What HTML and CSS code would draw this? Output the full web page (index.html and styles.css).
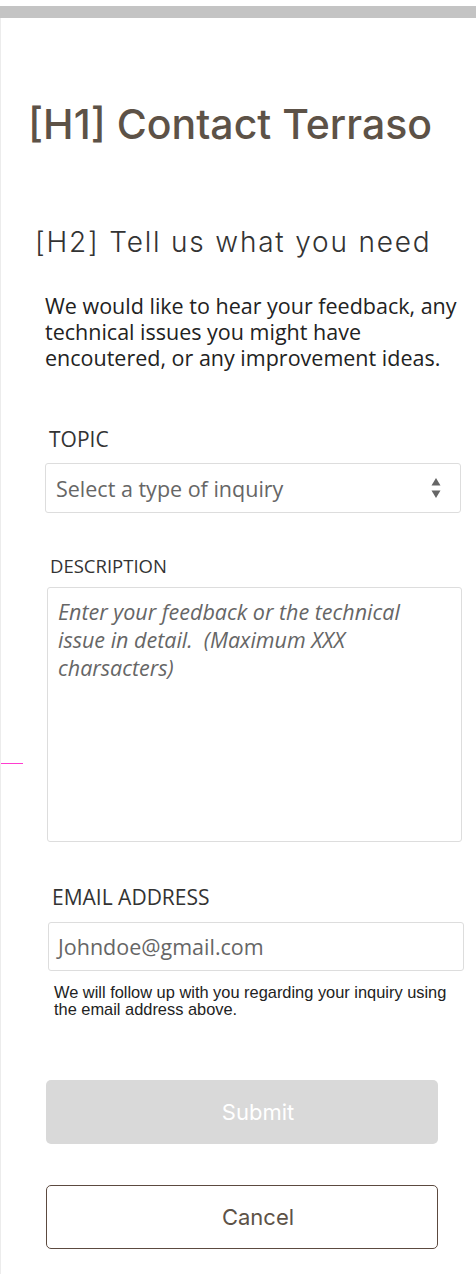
FILE: index.html
```html
<!DOCTYPE html>
<html lang="en">
<head>
    <meta charset="UTF-8">
    <meta name="viewport" content="width=device-width, initial-scale=1.0">
    <title>Contact Terraso</title>
    <link rel="stylesheet" href="styles.css">
</head>
<body>
    <div class="topbar"></div>
    <div class="page">
        <span class="marker"></span>
        <h1>[H1] Contact Terraso</h1>
        <h2>[H2] Tell us what you need</h2>
        <p class="intro">We would like to hear your feedback, any technical issues you might have encoutered, or any improvement ideas.</p>

        <form class="contact-form">
            <div class="field field-topic">
                <label class="label">TOPIC</label>
                <div class="select">
                    <span class="placeholder">Select a type of inquiry</span>
                    <svg class="arrows" width="10" height="22" viewBox="0 0 10 22">
                        <path d="M5 1 L9.5 8.5 L0.5 8.5 Z" fill="#666"/>
                        <path d="M5 21 L9.5 13.5 L0.5 13.5 Z" fill="#666"/>
                    </svg>
                </div>
            </div>

            <div class="field field-description">
                <label class="label label-small">DESCRIPTION</label>
                <div class="textarea">
                    <span class="placeholder italic">Enter your feedback or the technical issue in detail.&nbsp; (Maximum XXX charsacters)</span>
                </div>
            </div>

            <div class="field field-email">
                <label class="label">EMAIL ADDRESS</label>
                <div class="input">
                    <span class="placeholder">Johndoe@gmail.com</span>
                </div>
                <p class="help">We will follow up with you regarding your inquiry using the email address above.</p>
            </div>

            <div class="buttons">
                <button type="button" class="btn btn-submit">Submit</button>
                <button type="button" class="btn btn-cancel">Cancel</button>
            </div>
        </form>
    </div>
</body>
</html>
```

FILE: styles.css
```css
body {
    margin: 0;
    background: #fff;
    font-family: 'Open Sans', sans-serif;
    color: #222;
}

.topbar {
    height: 12px;
    margin-top: 6px;
    background-color: #c4c4c4;
}

.page {
    position: relative;
    min-height: 1256px;
    border-left: 1px solid #ececec;
    box-sizing: border-box;
    padding-top: 81px;
}

.marker {
    position: absolute;
    left: 0;
    top: 745px;
    width: 22px;
    height: 1px;
    background-color: #ff3dcf;
}

h1 {
    margin: 0 0 0 27px;
    font-family: 'Inter', sans-serif;
    font-size: 41px;
    line-height: 50px;
    font-weight: 500;
    color: #5d5247;
}

h2 {
    margin: 76px 0 0 34px;
    font-family: 'Inter', sans-serif;
    font-size: 28px;
    line-height: 34px;
    font-weight: 300;
    letter-spacing: 1.8px;
    color: #333;
}

.intro {
    margin: 34px 10px 0 44px;
    font-size: 21.5px;
    line-height: 26px;
    color: #222;
}

.field {
    display: flex;
    flex-direction: column;
}

.label {
    font-size: 21px;
    line-height: 24px;
    color: #333;
}

.label-small {
    font-size: 18.5px;
}

.placeholder {
    font-size: 21.5px;
    color: #666;
}

.italic {
    font-style: italic;
    line-height: 28px;
}

.field-topic {
    margin: 56px 15px 0 44px;
}

.field-topic .label {
    margin-left: 4px;
    margin-bottom: 12px;
}

.select {
    display: flex;
    align-items: center;
    justify-content: space-between;
    height: 50px;
    box-sizing: border-box;
    padding: 0 19px 0 10px;
    border: 1px solid #ddd;
    border-radius: 3px;
}

.field-description {
    margin: 41px 14px 0 46px;
}

.field-description .label {
    margin-left: 3px;
    margin-bottom: 9px;
}

.textarea {
    height: 255px;
    box-sizing: border-box;
    padding: 10px 20px 0 10px;
    border: 1px solid #ddd;
    border-radius: 3px;
}

.field-email {
    margin: 43px 12px 0 47px;
}

.field-email .label {
    margin-left: 4px;
    margin-bottom: 13px;
}

.input {
    display: flex;
    align-items: center;
    height: 49px;
    box-sizing: border-box;
    padding: 0 9px;
    border: 1px solid #ddd;
    border-radius: 3px;
}

.help {
    margin: 13px 0 0 6px;
    font-family: 'Liberation Sans', Arial, sans-serif;
    font-size: 16.4px;
    line-height: 17px;
    color: #222;
}

.buttons {
    display: flex;
    flex-direction: column;
    gap: 41px;
    margin: 62px 0 0 45px;
    width: 392px;
}

.btn {
    height: 64px;
    padding: 0 0 0 32px;
    border-radius: 5px;
    font-family: 'Inter', sans-serif;
    font-size: 22px;
    cursor: pointer;
}

.btn-submit {
    border: none;
    background-color: #d9d9d9;
    color: #fff;
}

.btn-cancel {
    border: 1px solid #5c4a40;
    background-color: #fff;
    color: #5d5247;
}
```
